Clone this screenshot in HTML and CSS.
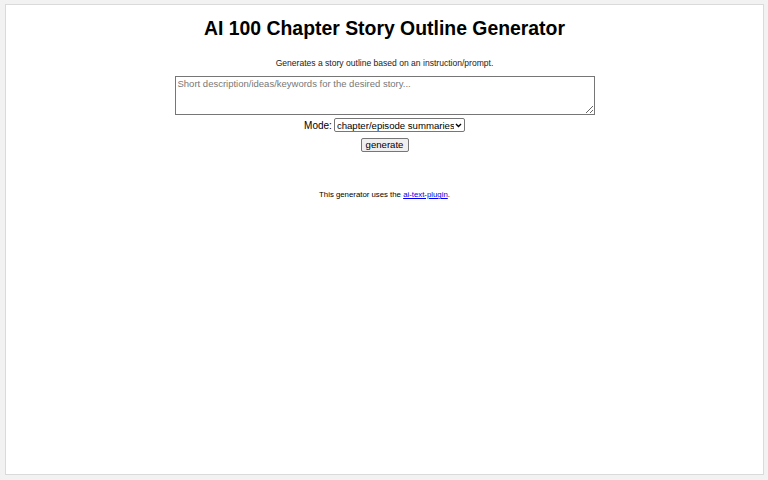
FILE: index.html
```html
<!DOCTYPE html>
<html>
<head>
<meta charset="utf-8">
<link rel="stylesheet" href="styles.css">
</head>
<body>
<div class="frame">
  <h1 class="title">AI 100 Chapter Story Outline Generator</h1>
  <p class="subtitle">Generates a story outline based on an instruction/prompt.</p>
  <textarea class="prompt" placeholder="Short description/ideas/keywords for the desired story..."></textarea>
  <div class="mode-row">
    <label class="mode-label">Mode:</label>
    <select class="mode-select">
      <option>chapter/episode summaries</option>
    </select>
  </div>
  <div class="btn-row"><button class="generate">generate</button></div>
  <p class="footer">This generator uses the <a href="#">ai-text-plugin</a>.</p>
</div>
</body>
</html>
```
FILE: styles.css
```css
html, body {
  margin: 0;
  padding: 0;
  background: #f2f2f2;
  font-family: "Liberation Sans", Arial, sans-serif;
}

.frame {
  box-sizing: border-box;
  margin: 4px 4px 0 5px;
  height: 471px;
  background: #fff;
  border: 1px solid #dadada;
  display: flex;
  flex-direction: column;
  align-items: center;
}

.title {
  margin: 12px 0 0;
  font-size: 19.4px;
  line-height: 23px;
  font-weight: bold;
  color: #000;
}

.subtitle {
  margin: 18px 0 0;
  font-size: 8.55px;
  line-height: 10px;
  color: #222;
}

.prompt {
  box-sizing: border-box;
  margin-top: 8px;
  width: 420px;
  height: 39px;
  padding: 1px 2px;
  border: 1px solid #767676;
  font-family: "Liberation Sans", Arial, sans-serif;
  font-size: 9.5px;
  resize: vertical;
}

.prompt::placeholder {
  color: #777;
}

.mode-row {
  margin-top: 3px;
  display: flex;
  align-items: center;
  gap: 2px;
  font-size: 10px;
  line-height: 13px;
}

/* compact select with a small chevron */
.mode-select {
  appearance: none;
  -webkit-appearance: none;
  box-sizing: border-box;
  font-family: "Liberation Sans", Arial, sans-serif;
  font-size: 9.6px;
  color: #000;
  height: 14px;
  width: 131px;
  padding: 0 10px 0 2px;
  border: 1px solid #767676;
  border-radius: 2px;
  background: #fff url("data:image/svg+xml,%3Csvg xmlns='http://www.w3.org/2000/svg' width='7' height='5' viewBox='0 0 7 5'%3E%3Cpath d='M1 1l2.5 2.5L6 1' fill='none' stroke='%23000' stroke-width='1.4'/%3E%3C/svg%3E") no-repeat right 2px center;
}

.btn-row {
  margin-top: 2px;
}

.generate {
  box-sizing: border-box;
  font-family: "Liberation Sans", Arial, sans-serif;
  font-size: 9.6px;
  height: 14px;
  width: 48px;
  padding: 0;
  line-height: 12px;
  color: #000;
  background: #efefef;
  border: 1px solid #767676;
  border-radius: 2px;
}

.footer {
  margin: 38px 0 0;
  font-size: 7.8px;
  line-height: 10px;
  color: #000;
}

.footer a {
  color: #0000ee;
}
```
